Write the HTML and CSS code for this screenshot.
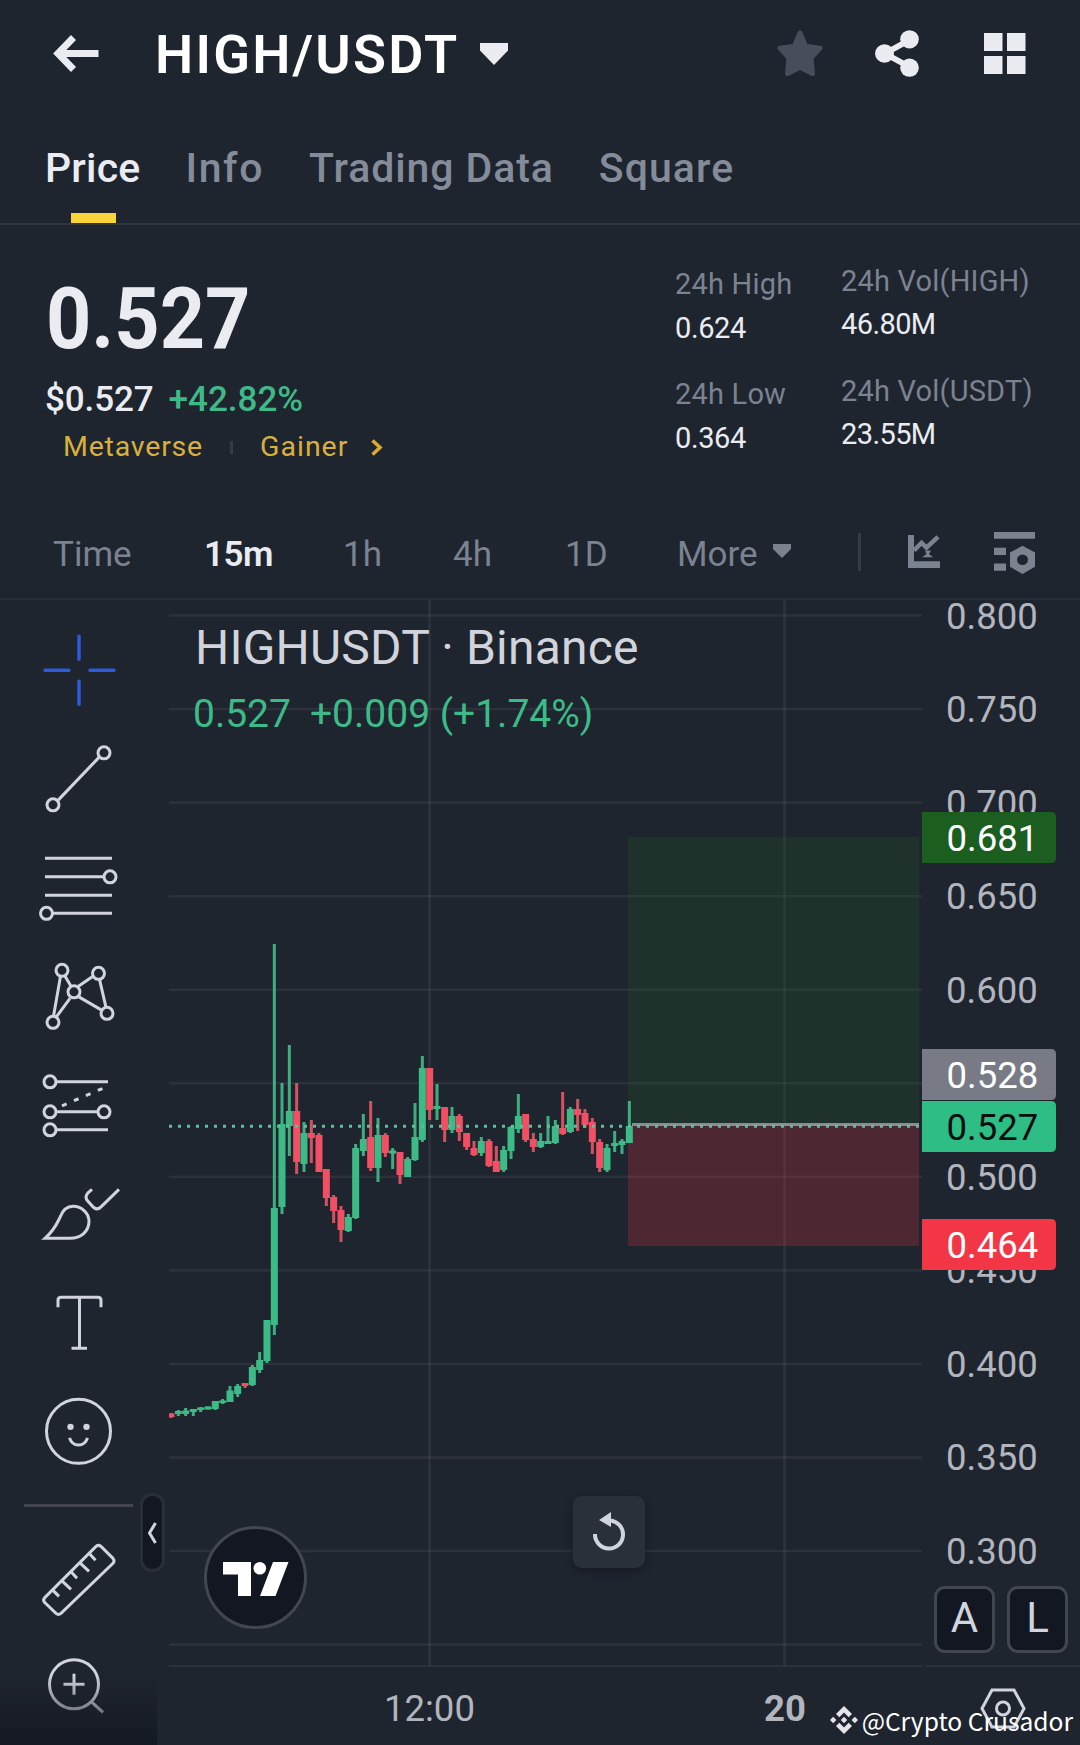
FILE: index.html
```html
<!DOCTYPE html>
<html lang="en">
<head>
    <meta charset="UTF-8">
    <meta name="viewport" content="width=device-width, initial-scale=1.0">
    <title>HIGH/USDT</title>
    <link rel="stylesheet" href="styles.css">
</head>
<body>
    <header class="topbar">
        <svg class="back" width="46" height="37" viewBox="0 0 46 37" fill="none" stroke="#eaecf2" stroke-width="7">
            <path d="M45.500 18.500H6M20.500 2.500L5 18.500L20.500 34.500"/>
        </svg>
        <h1>HIGH/USDT</h1>
        <svg class="caret" width="28" height="22" viewBox="0 0 28 22" fill="#eaecf2"><path d="M0 0H28V7.500L14 22L0 7.500Z"/></svg>
        <div class="actions">
            <svg width="46" height="47" viewBox="0 0 46 48" preserveAspectRatio="none" fill="#474d5a" stroke="#474d5a" stroke-width="5" stroke-linejoin="round">
                <path d="M23 3L28.500 16.500L43 18.500L34 28.500L35.500 44.500L23 38L10.500 44.500L12 28.500L3 18.500L17.500 16.500Z"/>
            </svg>
            <svg width="44" height="47" viewBox="0 0 44 48" preserveAspectRatio="none" fill="#eaecf2">
                <path d="M35 10L10 24L35 38" fill="none" stroke="#eaecf2" stroke-width="6"/>
                <circle cx="34.500" cy="9.500" r="9.300"/>
                <circle cx="9.500" cy="24" r="9.500"/>
                <circle cx="34.500" cy="38.500" r="9.300"/>
            </svg>
            <svg width="42" height="41" viewBox="0 0 42 41" fill="#eaecf2">
                <path d="M0 0H18.500V18H0ZM23 0H41.500V18H23ZM0 23H18.500V41H0ZM23 23H41.500V41H23Z"/>
            </svg>
        </div>
    </header>

    <nav class="tabs">
        <a class="tab tab-price active">Price</a>
        <a class="tab tab-info">Info</a>
        <a class="tab tab-data">Trading Data</a>
        <a class="tab tab-square">Square</a>
    </nav>

    <section class="summary">
        <div class="quote">
            <div class="last-price">0.527</div>
            <div class="fiat"><span class="usd">$0.527</span><span class="change">+42.82%</span></div>
            <div class="tags">
                <span class="tag-meta">Metaverse</span>
                <i class="tag-sep"></i>
                <span class="tag-gainer">Gainer</span>
                <svg width="12" height="17" viewBox="0 0 12 17" fill="none" stroke="#d9ac2b" stroke-width="3.600"><path d="M1.500 1.500L9 8.500L1.500 15.500"/></svg>
            </div>
        </div>
        <dl class="stats stats-left">
            <div><dt>24h High</dt><dd>0.624</dd></div>
            <div><dt>24h Low</dt><dd>0.364</dd></div>
        </dl>
        <dl class="stats stats-right">
            <div><dt>24h Vol(HIGH)</dt><dd>46.80M</dd></div>
            <div><dt>24h Vol(USDT)</dt><dd>23.55M</dd></div>
        </dl>
    </section>

    <nav class="intervals">
        <span>Time</span>
        <span class="active">15m</span>
        <span>1h</span>
        <span>4h</span>
        <span>1D</span>
        <span class="more">More <svg width="18" height="14" viewBox="0 0 18 14" fill="#7b8290"><path d="M0 0H18V5L9 14L0 5Z"/></svg></span>
        <i class="divider"></i>
        <svg width="32" height="33" viewBox="0 0 32 34" preserveAspectRatio="none" fill="#7b8290">
            <path d="M0 0H6V27H32V34H0Z"/>
            <path d="M6 16L13.500 8L18.500 13L30 2" fill="none" stroke="#7b8290" stroke-width="4.500"/>
            <path d="M14 23H25L21 19.500L23 16H17L18.500 19.500Z"/>
        </svg>
        <svg class="settings" width="42" height="42" viewBox="0 0 42 44" preserveAspectRatio="none" fill="#7b8290">
            <path d="M0 0H41V7H0ZM0 16.500H12V24H0ZM0 33H12V40.500H0Z"/>
            <path fill-rule="evenodd" d="M28.500 14.500L41 21.500V36.500L28.500 44L16 36.500V21.500ZM28.500 23.500A5.500 5.500 0 1 0 28.500 34.500A5.500 5.500 0 1 0 28.500 23.500Z"/>
        </svg>
    </nav>

    <main class="chart">
        <aside class="tools">
            <svg class="tool cross" viewBox="-54 -54 108 108"><path d="M0 -34V-11M0 11V34M-34 0H-10M11 0H35"/></svg>
            <svg class="tool" viewBox="-54 -54 108 108"><path d="M-22 22L20 -22"/><circle cx="25" cy="-26.500" r="6"/><circle cx="-26" cy="25.500" r="6"/></svg>
            <svg class="tool" viewBox="-54 -54 108 108"><path d="M-34 -29H33M-34 -10.500H25M-34 8H33M-26 26H33"/><circle cx="31" cy="-10.500" r="6"/><circle cx="-32.500" cy="26" r="6"/></svg>
            <svg class="tool" viewBox="-54 -54 108 108"><path d="M-25.500 20L-18.500 -20M-14.500 -21L-8 -10M-2 -9L14 -20M20.500 -17L27 11M-1 0L23 14M-23 21L-9 2"/><circle cx="-17" cy="-26" r="6"/><circle cx="19.500" cy="-23" r="6"/><circle cx="-5" cy="-4.500" r="6"/><circle cx="-26" cy="26" r="6"/><circle cx="28" cy="17" r="6"/></svg>
            <svg class="tool" viewBox="-54 -54 108 108"><path d="M-22 -23.500H29M-22 6.500H19M-22 24.500H29"/><path d="M-17 0.500L25 -17.500" stroke-dasharray="5 8"/><circle cx="-29" cy="-23.500" r="6"/><circle cx="-29" cy="6.500" r="6"/><circle cx="25" cy="6.500" r="6"/><circle cx="-29" cy="24.500" r="6"/></svg>
            <svg class="tool" viewBox="-54 -54 108 108"><path d="M-34 25C-24 16 -22 10 -19 4C-16 -4 -12 -7 -6 -7C3 -7 10 0 10 8C10 18 2 25 -9 25Z"/><path d="M13 -24L9 -20.500Q5 -16 9 -12L14 -6.500Q18 -2.500 22 -6.500L40 -24"/></svg>
            <svg class="tool" viewBox="-54 -54 108 108"><path d="M-21 -15V-22Q-21 -25 -18 -25H19Q22 -25 22 -22V-15M0.500 -25V26M-7.500 26H8"/></svg>
            <svg class="tool" viewBox="-54 -54 108 108"><circle cx="-0.500" cy="0" r="32"/><path d="M-9.500 6.500C-6.500 16 5.500 16 8.500 6.500"/><g fill="#d1d4dc" stroke="none"><circle cx="-8.500" cy="-4.500" r="3.200"/><circle cx="7.500" cy="-4.500" r="3.200"/></g></svg>
            <hr>
            <svg class="tool" viewBox="-54 -54 108 108"><path d="M17 -34Q19.500 -36 22 -34L34 -22Q36 -19.500 34 -17L-18 33Q-20.500 35 -23 33L-34.500 22Q-36.500 19.500 -34 17ZM-26 10L-20 16M-16.500 1L-8 9M-7.500 -8L-2 -2M1.500 -17L10 -9M11 -26L16.500 -20"/></svg>
            <svg class="tool zoom" viewBox="-54 -54 108 108"><circle cx="-5" cy="-4" r="24.500"/><path d="M-5 -14.500V6.500M-15.500 -4H5.500M13 14L24 24"/></svg>
            <div class="tools-fade"></div>
            <button class="collapse">
                <svg width="9" height="22" viewBox="0 0 9 22" fill="none" stroke="#d1d4dc" stroke-width="3"><path d="M7.500 1L1.500 11L7.500 21"/></svg>
            </button>
        </aside>

        <div class="plot">
            <svg id="plot" width="911" height="1067" viewBox="169 600 911 1067"></svg>
            <div class="legend">
                <p class="symbol">HIGHUSDT · Binance</p>
                <p class="values"><span>0.527</span><span>+0.009 (+1.74%)</span></p>
            </div>
            <div class="tv-logo">
                <svg width="66" height="34" viewBox="0 0 66 34" fill="#fff"><path d="M0 0H28V34H15V12.500H0ZM50 0H65.500L52.500 34H37Z"/><circle cx="36.800" cy="6.300" r="6.300"/></svg>
            </div>
            <button class="reset">
                <svg width="36" height="40" viewBox="0 0 36 40" fill="none" stroke="#d1d4dc" stroke-width="4"><path d="M4 22A14 14 0 1 0 18 8.500"/><path d="M20 0V15L8 8Z" fill="#d1d4dc" stroke="none"/></svg>
            </button>
            <div class="scale-modes"><button>A</button><button>L</button></div>
            <div class="time-axis">
                <span class="noon">12:00</span>
                <span class="day">20</span>
                <svg width="46" height="41" viewBox="0 0 46 41" fill="none" stroke="#d1d4dc" stroke-width="3"><path d="M12 2H34L44 20.500L34 39H12L2 20.500Z"/><circle cx="23" cy="20.500" r="6.500"/></svg>
            </div>
        </div>
    </main>

    <div class="watermark">
        <svg width="28" height="28" viewBox="0 0 28 28" fill="#e3e5ea"><path d="M14 0L22 8L18.700 11.300L14 6.600L9.300 11.300L6 8ZM14 28L22 20L18.700 16.700L14 21.400L9.300 16.700L6 20ZM14 10.800L17.200 14L14 17.200L10.800 14ZM3.200 10.800L6.400 14L3.200 17.200L0 14ZM24.800 10.800L28 14L24.800 17.200L21.600 14Z"/></svg>
        <span>@Crypto Crusador</span>
    </div>

    <script>
        // [direction, high, low, body top, body bottom]
        const candles = [
            ['r', 1413, 1418, 1413.5, 1417], ['g', 1410, 1416, 1411, 1414], ['g', 1408, 1416, 1410.5, 1414],
            ['g', 1409, 1416, 1409, 1412], ['g', 1407, 1412, 1407.5, 1410], ['g', 1406.5, 1409.5, 1406.5, 1409.5],
            ['g', 1401, 1410, 1401, 1409], ['g', 1399, 1404, 1400.5, 1403], ['g', 1386, 1402, 1390.5, 1402],
            ['g', 1384, 1397, 1386, 1394], ['r', 1383, 1388, 1383, 1386], ['g', 1365, 1386, 1367, 1385],
            ['g', 1352, 1373, 1360, 1370], ['g', 1320, 1363, 1320, 1361], ['g', 944, 1335, 1208, 1325],
            ['g', 1083, 1214, 1124, 1207], ['g', 1045, 1156, 1111, 1126], ['r', 1083, 1174, 1111, 1162],
            ['g', 1122, 1172, 1133, 1164], ['r', 1120, 1163, 1133, 1138], ['r', 1133, 1172, 1135, 1172],
            ['r', 1169, 1206, 1169, 1198], ['r', 1195, 1223, 1197, 1211], ['r', 1206, 1242, 1210, 1230],
            ['g', 1214, 1232, 1217, 1231], ['g', 1144, 1219, 1148, 1218], ['g', 1114, 1156, 1139, 1151],
            ['r', 1101, 1171, 1137, 1168], ['g', 1118, 1182, 1135, 1168], ['r', 1133, 1157, 1135, 1153],
            ['g', 1148, 1169, 1150.5, 1153.5], ['r', 1152, 1184, 1152, 1175], ['g', 1157, 1177, 1159, 1177],
            ['g', 1103, 1161, 1137, 1160], ['g', 1056, 1142, 1068, 1140], ['r', 1068, 1120, 1068, 1110],
            ['g', 1084, 1120, 1106, 1109], ['r', 1107, 1142, 1107, 1130], ['g', 1107, 1133, 1116, 1130],
            ['r', 1114, 1141, 1116, 1132], ['r', 1133, 1150, 1133, 1147], ['r', 1141, 1156, 1148, 1155],
            ['g', 1137, 1156, 1141, 1153], ['r', 1139, 1167, 1141, 1166], ['r', 1146, 1172, 1161, 1172],
            ['g', 1146, 1172, 1150, 1170], ['g', 1126, 1159, 1127, 1151], ['g', 1094, 1133, 1116, 1129],
            ['r', 1114, 1142, 1114, 1140], ['r', 1133, 1152, 1139, 1147], ['g', 1133, 1148, 1141, 1147],
            ['g', 1116, 1144, 1141, 1144], ['g', 1120, 1144, 1126, 1143], ['r', 1092, 1135, 1128, 1134],
            ['g', 1107, 1133, 1109, 1132], ['r', 1099, 1131, 1109, 1115], ['r', 1109, 1128, 1113, 1125],
            ['r', 1118, 1154, 1122, 1142], ['r', 1139, 1172, 1142, 1168], ['g', 1144, 1172, 1148, 1170],
            ['g', 1131, 1152, 1143, 1146], ['g', 1139, 1154, 1141, 1145], ['g', 1101, 1143, 1126, 1143]
        ];

        const tags = [
            { text: '0.681', y: 812, fill: '#1b5e20', color: '#fff' },
            { text: '0.528', y: 1049, fill: '#787b86', color: '#fff' },
            { text: '0.527', y: 1101, fill: '#2ebd85', color: '#0b0e11' },
            { text: '0.464', y: 1219, fill: '#f23645', color: '#fff' }
        ];

        const left = 169;
        const right = 922;
        const colors = { g: '#3cbb87', r: '#f04f64' };
        const wickColors = { g: '#40ad80', r: '#d4525f' };

        function drawGrid() {
            let out = '';
            for (let i = 0; i < 12; i++) {
                const y = 615.5 + i * 93.55;
                out += `<rect class="grid" x="${left}" y="${y - 1.2}" width="${right - left}" height="2.5"/>`;
                // 0.550 sits fully under the last price tags
                if (i < 11 && i !== 5) {
                    out += `<text class="price" x="946" y="${y + 13}">${(0.8 - i * 0.05).toFixed(3)}</text>`;
                }
            }
            [429.5, 784.7].forEach(x => {
                out += `<rect class="grid" x="${x - 1.4}" y="600" width="2.8" height="1066"/>`;
            });
            out += `<rect class="grid" x="${left}" y="1665" width="${right - left}" height="2"/>`;
            out += `<rect class="grid" x="925" y="1665" width="155" height="2"/>`;
            return out;
        }

        function drawPosition() {
            return `<rect x="628" y="837" width="291" height="286" fill="#1f5e20" fill-opacity="0.22"/>
                <rect x="628" y="1125" width="291" height="121" fill="#f23645" fill-opacity="0.22"/>
                <rect x="632" y="1123" width="287" height="3" fill="#8a8d96"/>`;
        }

        function drawCandles() {
            return candles.map(([dir, high, low, top, bottom], i) => {
                const x = Math.round((171 + i * 7.392) * 3) / 3;
                const start = Math.max(x - 3.5, left);
                return `<rect x="${x - 1.5}" y="${high}" width="3" height="${low - high}" fill="${wickColors[dir]}"/>
                    <rect x="${start}" y="${top}" width="${x + 3.5 - start}" height="${bottom - top}" fill="${colors[dir]}"/>`;
            }).join('');
        }

        function drawTags() {
            return tags.map(t => `<path d="M922 ${t.y}h129q5 0 5 5v41q0 5 -5 5h-129z" fill="${t.fill}"/>
                <text class="price" x="946.5" y="${t.y + 39}" style="fill:${t.color}">${t.text}</text>`).join('');
        }

        document.getElementById('plot').innerHTML = drawGrid() + drawPosition() + drawCandles() +
            `<path d="M169 1126.3H919" stroke="#5fbf98" stroke-width="3" stroke-dasharray="3 6"/>` + drawTags();
    </script>
</body>
</html>
```
FILE: styles.css
```css
* {
    box-sizing: border-box;
}
body {
    margin: 0;
    width: 1080px;
    height: 1745px;
    overflow: hidden;
    position: relative;
    background-color: #1f252f;
    color: #eaecf2;
    font-family: Roboto, "Liberation Sans", sans-serif;
}
svg {
    display: block;
    flex: none;
    overflow: visible;
}
h1, p, dl, dd {
    margin: 0;
}
button {
    padding: 0;
    font: inherit;
    color: inherit;
}
.topbar {
    display: flex;
    align-items: center;
    height: 107px;
    padding: 0 54px 0 53px;
}
.topbar h1 {
    margin-left: 56px;
    font-size: 54px;
    font-weight: 600;
    line-height: 64px;
    letter-spacing: 2.2px;
    color: #fff;
    width: 304px;
    white-space: nowrap;
    padding-top: 2px;
}
.caret {
    margin-left: 21px;
}
.actions {
    display: flex;
    align-items: center;
    margin-left: auto;
}
.actions svg:nth-child(2) {
    margin: 0 65px 0 52px;
}
.tabs {
    display: flex;
    gap: 45px;
    height: 118px;
    padding: 31px 0 0 45px;
    border-bottom: 2px solid #2f3641;
    font-size: 41px;
    font-weight: 500;
    line-height: 60px;
    color: #848b99;
}
.tab {
    position: relative;
    white-space: nowrap;
}
.tab-price {
    letter-spacing: 0.2px;
}
.tab-info {
    letter-spacing: 1.6px;
}
.tab-data {
    letter-spacing: 0.9px;
}
.tab-square {
    letter-spacing: 1.1px;
}
.tab.active {
    color: #eaecf2;
}
.tab.active::after {
    content: "";
    position: absolute;
    left: 26px;
    bottom: 0;
    width: 45px;
    height: 10px;
    background-color: #f8d33a;
}
.summary {
    display: flex;
    height: 285px;
}
.quote {
    width: 675px;
    padding: 44px 0 0 46px;
}
.last-price {
    font-size: 85px;
    font-weight: 700;
    line-height: 100px;
    transform: scaleX(0.93);
    transform-origin: left;
}
.fiat {
    display: flex;
    gap: 15px;
    margin: 8px 0 0 -1px;
    font-size: 35px;
    font-weight: 500;
    line-height: 46px;
}
.usd {
    letter-spacing: -0.1px;
}
.change {
    color: #3fba87;
}
.tags {
    display: flex;
    align-items: center;
    padding-left: 17px;
    font-size: 28.5px;
    line-height: 48px;
    color: #d9b13a;
}
.tag-meta {
    letter-spacing: 0.8px;
}
.tag-gainer {
    letter-spacing: 1px;
}
.tag-sep {
    width: 3px;
    height: 13px;
    margin: 0 27px 0 27px;
    background-color: #353c48;
}
.tags svg {
    margin-left: 23px;
}
.stats {
    padding-top: 37px;
    font-size: 29px;
    white-space: nowrap;
}
.stats-left {
    width: 166px;
}
.stats-right {
    padding-top: 34px;
}
.stats div {
    height: 110px;
}
.stats dt {
    line-height: 45px;
    letter-spacing: 0.2px;
    color: #7b8290;
}
.stats dd {
    line-height: 42px;
    letter-spacing: -0.4px;
}
.stats-right dd {
    line-height: 40px;
    letter-spacing: -0.6px;
}
.intervals {
    display: grid;
    grid-template-columns: 151px 139px 110px 112px 112px 181px 50px 86px 42px;
    align-items: center;
    height: 90px;
    padding-left: 53px;
    border-bottom: 2px solid #272d37;
    font-size: 35px;
    color: #7b8290;
}
.intervals .active {
    font-weight: 600;
    letter-spacing: -0.5px;
    color: #eaecf2;
}
.intervals > svg {
    margin-top: -5px;
}
.intervals > .settings {
    margin-top: -3px;
}
.more {
    display: flex;
    align-items: center;
    gap: 15px;
}
.more svg {
    margin-top: -7px;
}
.divider {
    width: 3px;
    height: 38px;
    margin-top: -4px;
    background-color: #353a45;
}
.chart {
    display: grid;
    grid-template-columns: 169px 911px;
    height: 1145px;
}
.tools {
    position: relative;
    display: flex;
    flex-direction: column;
    padding: 16px 0 0 25px;
}
.tool {
    width: 108px;
    height: 108.7px;
    fill: none;
    stroke: #d1d4dc;
    stroke-width: 3;
}
.cross {
    stroke: #2f5bd8;
    stroke-width: 3.5;
    stroke-linecap: round;
}
.tools hr {
    width: 109px;
    height: 3px;
    margin: 18px 0 19px -1px;
    border: 0;
    background-color: #434651;
}
.tools-fade {
    position: absolute;
    left: 0;
    bottom: 0;
    width: 157px;
    height: 70px;
    background: linear-gradient(rgba(19, 23, 34, 0), rgba(19, 23, 34, 0.9));
}
.collapse {
    position: absolute;
    left: 140px;
    top: 893px;
    display: flex;
    align-items: center;
    justify-content: center;
    width: 25px;
    height: 79px;
    border: 3px solid #2a2e39;
    border-radius: 12px;
    background-color: #131722;
}
.plot {
    position: relative;
}
.plot .grid {
    fill: #b8bcc8;
    fill-opacity: 0.085;
}
.price {
    font-size: 36.5px;
    fill: #b2b5be;
}
.legend {
    position: absolute;
    left: 24px;
    top: 18px;
    white-space: nowrap;
}
.symbol {
    font-size: 48px;
    line-height: 60px;
    letter-spacing: 0.2px;
    padding-left: 2px;
    color: #d1d4dc;
}
.values {
    display: flex;
    gap: 19px;
    margin-top: 8px;
    font-size: 39px;
    line-height: 56px;
    color: #3cbb87;
}
.tv-logo {
    position: absolute;
    left: 35px;
    top: 926px;
    display: flex;
    align-items: center;
    justify-content: center;
    width: 103px;
    height: 103px;
    border: 3px solid #434651;
    border-radius: 50%;
    background-color: #131722;
}
.tv-logo svg {
    margin-top: 2px;
}
.reset {
    position: absolute;
    left: 404px;
    top: 896px;
    display: flex;
    align-items: center;
    justify-content: center;
    width: 72px;
    height: 72px;
    border: 0;
    border-radius: 9px;
    background-color: #2a303a;
    box-shadow: 0 3px 8px rgba(0, 0, 0, 0.35);
}
.scale-modes {
    position: absolute;
    left: 765px;
    top: 986px;
    display: flex;
    gap: 12px;
}
.scale-modes button {
    width: 61px;
    height: 67px;
    border: 3px solid #434651;
    border-radius: 11px;
    background-color: #131722;
    font-size: 42px;
    line-height: 54px;
    padding-bottom: 3px;
    color: #d1d4dc;
}
.time-axis {
    display: flex;
    align-items: center;
    height: 78px;
    padding-left: 215px;
    font-size: 36.5px;
    color: #b2b5be;
}
.noon {
    width: 380px;
    padding-top: 4px;
}
.day {
    width: 216px;
    padding-top: 4px;
    font-weight: 700;
}
.time-axis svg {
    margin-top: 4px;
}
.watermark {
    position: absolute;
    right: 7px;
    bottom: 6px;
    display: flex;
    align-items: center;
    gap: 4px;
    font-family: "Noto Sans CJK SC", sans-serif;
    font-size: 24.6px;
    line-height: 38px;
    color: #fff;
}
```
